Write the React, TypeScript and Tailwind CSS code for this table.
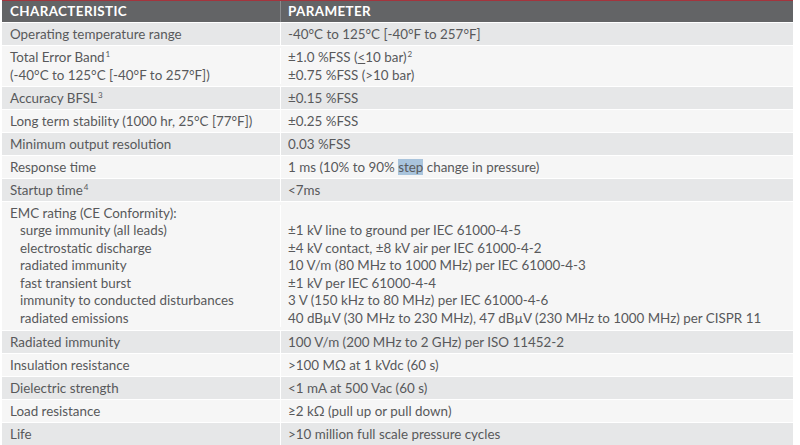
function Sup({ n }: { n: string }) {
    return <sup className="text-[8px] relative -top-[5px] ml-[1px]">{n}</sup>
}

const emc = [
    ["surge immunity (all leads)", "±1 kV line to ground per IEC 61000-4-5"],
    ["electrostatic discharge", "±4 kV contact, ±8 kV air per IEC 61000-4-2"],
    ["radiated immunity", "10 V/m (80 MHz to 1000 MHz) per IEC 61000-4-3"],
    ["fast transient burst", "±1 kV per IEC 61000-4-4"],
    ["immunity to conducted disturbances", "3 V (150 kHz to 80 MHz) per IEC 61000-4-6"],
    ["radiated emissions", "40 dBµV (30 MHz to 230 MHz), 47 dBµV (230 MHz to 1000 MHz) per CISPR 11"],
]

const tail = [
    ["Radiated immunity", "100 V/m (200 MHz to 2 GHz) per ISO 11452-2"],
    ["Insulation resistance", ">100 MΩ at 1 kVdc (60 s)"],
    ["Dielectric strength", "<1 mA at 500 Vac (60 s)"],
    ["Load resistance", "≥2 kΩ (pull up or pull down)"],
    ["Life", ">10 million full scale pressure cycles"],
]

function Row({ left, right, dark, className = "leading-[22px]" }: { left: React.ReactNode; right: React.ReactNode; dark: boolean; className?: string }) {
    return (
        <div className={`flex border-t border-white ${dark ? "bg-[#e6e7e8]" : "bg-[#f6f6f6]"} ${className}`}>
            <div className="w-[279px] shrink-0 border-r border-white pl-[8px] whitespace-nowrap">{left}</div>
            <div className="flex-1 pl-[7px] whitespace-nowrap">{right}</div>
        </div>
    )
}

export default function App() {
    return (
        <div className="w-[800px] h-[445px] bg-white pl-[2px] pr-[7px]" style={{ fontFamily: "Lato, 'Liberation Sans', sans-serif" }}>
            <div className="text-[13.4px] text-[#58595b]">
                <div className="flex h-[22px] border-t border-[#a4343d] bg-[#636466] text-white font-bold leading-[21px] tracking-[0.4px]">
                    <div className="w-[279px] shrink-0 border-r border-[#8a8b8d] pl-[8px]">CHARACTERISTIC</div>
                    <div className="flex-1 pl-[7px]">PARAMETER</div>
                </div>
                <Row dark left="Operating temperature range" right="-40°C to 125°C [-40°F to 257°F]" />
                <Row
                    dark={false}
                    className="leading-[18px] py-[2px]"
                    left={<>Total Error Band<Sup n="1" /><br />(-40°C to 125°C [-40°F to 257°F])</>}
                    right={<>±1.0 %FSS (<span className="underline">&lt;</span>10 bar)<Sup n="2" /><br />±0.75 %FSS (&gt;10 bar)</>}
                />
                <Row dark left={<>Accuracy BFSL<Sup n="3" /></>} right="±0.15 %FSS" />
                <Row dark={false} left="Long term stability (1000 hr, 25°C [77°F])" right="±0.25 %FSS" />
                <Row dark left="Minimum output resolution" right="0.03 %FSS" />
                <Row
                    dark={false}
                    left="Response time"
                    right={<>1 ms (10% to 90% <span className="bg-[#a9c4dc]">step</span> change in pressure)</>}
                />
                <Row dark left={<>Startup time<Sup n="4" /></>} right="<7ms" />
                <Row
                    dark={false}
                    className="leading-[17.5px] py-[2.5px]"
                    left={
                        <>
                            <div>EMC rating (CE Conformity):</div>
                            {emc.map(([l]) => (
                                <div key={l} className="pl-[10px]">{l}</div>
                            ))}
                        </>
                    }
                    right={
                        <>
                            <div>&nbsp;</div>
                            {emc.map(([l, r]) => (
                                <div key={l}>{r}</div>
                            ))}
                        </>
                    }
                />
                {tail.map(([l, r], i) => (
                    <Row key={l} dark={i % 2 === 0} left={l} right={r} />
                ))}
            </div>
        </div>
    )
}
